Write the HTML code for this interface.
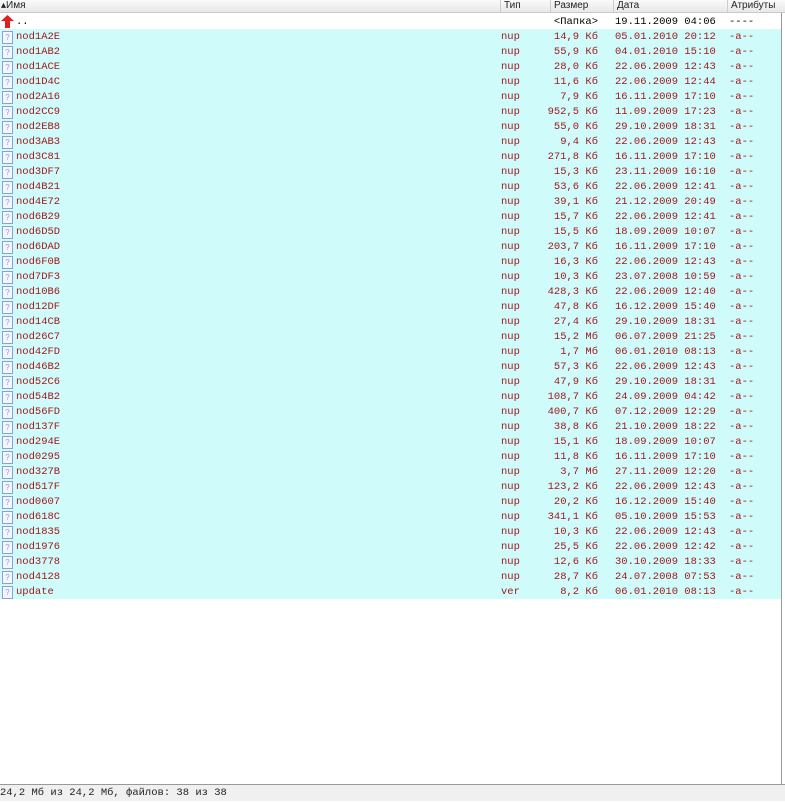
<!DOCTYPE html><html><head><meta charset="utf-8"><style>
body{margin:0;width:785px;height:800px;background:#fff;position:relative;overflow:hidden;font-family:"Liberation Mono",monospace;font-size:10.5px;}
#hdr{position:absolute;left:0;top:0;width:785px;height:12px;background:linear-gradient(#fafafa,#e8e8e8);border-bottom:1px solid #c8c8c8;font-family:"Liberation Sans","DejaVu Sans",sans-serif;font-size:10px;color:#222;}
#hdr span{position:absolute;top:0;line-height:12px}
#hdr i{position:absolute;top:0;width:1px;height:12px;background:#ccc}
.r{position:absolute;left:0;width:781px;height:15px;line-height:15px;color:#a11a1a;white-space:pre}
.c{background:#cffbfb}
.r span{position:absolute;top:1px}
.n{left:16px}.t{left:501px}.s{right:183px}.d{left:615px}.a{left:729px}
.ic{position:absolute;left:2px;top:2px;width:9px;height:11px;border:1px solid #8ea0d0;background:#f4f6ff;color:#8ea0d0;font-family:"Liberation Sans",sans-serif;font-size:8px;line-height:11px;text-align:center}
#vb{position:absolute;left:781px;top:13px;width:1px;height:771px;background:#999}
#st{position:absolute;left:0;top:784px;width:785px;height:16px;background:#f0f0f0;border-top:1px solid #999;line-height:17px;color:#222;font-size:10.5px}
</style></head><body>
<div id="hdr"><span style="left:1px">▴Имя</span><i style="left:500px"></i><span style="left:504px">Тип</span><i style="left:550px"></i><span style="left:554px">Размер</span><i style="left:613px"></i><span style="left:617px">Дата</span><i style="left:727px"></i><span style="left:731px">Атрибуты</span></div>
<div class="r" style="top:14px;color:#000"><svg style="position:absolute;left:1px;top:1px" width="13" height="13"><path d="M6.5 0L13 6H9V13H4V6H0Z" fill="#e02020"/></svg><span class="n">..</span><span class="s">&lt;Папка&gt;</span><span class="d">19.11.2009 04:06</span><span class="a">----</span></div>
<div id="rows"></div>
<div id="vb"></div>
<div id="st">24,2 Мб из 24,2 Мб, файлов: 38 из 38</div>
<script>
var d=[["nod1A2E","14,9 Кб","05.01.2010 20:12"],["nod1AB2","55,9 Кб","04.01.2010 15:10"],["nod1ACE","28,0 Кб","22.06.2009 12:43"],["nod1D4C","11,6 Кб","22.06.2009 12:44"],["nod2A16","7,9 Кб","16.11.2009 17:10"],["nod2CC9","952,5 Кб","11.09.2009 17:23"],["nod2EB8","55,0 Кб","29.10.2009 18:31"],["nod3AB3","9,4 Кб","22.06.2009 12:43"],["nod3C81","271,8 Кб","16.11.2009 17:10"],["nod3DF7","15,3 Кб","23.11.2009 16:10"],["nod4B21","53,6 Кб","22.06.2009 12:41"],["nod4E72","39,1 Кб","21.12.2009 20:49"],["nod6B29","15,7 Кб","22.06.2009 12:41"],["nod6D5D","15,5 Кб","18.09.2009 10:07"],["nod6DAD","203,7 Кб","16.11.2009 17:10"],["nod6F0B","16,3 Кб","22.06.2009 12:43"],["nod7DF3","10,3 Кб","23.07.2008 10:59"],["nod10B6","428,3 Кб","22.06.2009 12:40"],["nod12DF","47,8 Кб","16.12.2009 15:40"],["nod14CB","27,4 Кб","29.10.2009 18:31"],["nod26C7","15,2 Мб","06.07.2009 21:25"],["nod42FD","1,7 Мб","06.01.2010 08:13"],["nod46B2","57,3 Кб","22.06.2009 12:43"],["nod52C6","47,9 Кб","29.10.2009 18:31"],["nod54B2","108,7 Кб","24.09.2009 04:42"],["nod56FD","400,7 Кб","07.12.2009 12:29"],["nod137F","38,8 Кб","21.10.2009 18:22"],["nod294E","15,1 Кб","18.09.2009 10:07"],["nod0295","11,8 Кб","16.11.2009 17:10"],["nod327B","3,7 Мб","27.11.2009 12:20"],["nod517F","123,2 Кб","22.06.2009 12:43"],["nod0607","20,2 Кб","16.12.2009 15:40"],["nod618C","341,1 Кб","05.10.2009 15:53"],["nod1835","10,3 Кб","22.06.2009 12:43"],["nod1976","25,5 Кб","22.06.2009 12:42"],["nod3778","12,6 Кб","30.10.2009 18:33"],["nod4128","28,7 Кб","24.07.2008 07:53"],["update","8,2 Кб","06.01.2010 08:13","ver"]];
var h="";d.forEach(function(x,i){h+='<div class="r c" style="top:'+(29+i*15)+'px"><div class="ic">?</div><span class="n">'+x[0]+'</span><span class="t">'+(x[3]||"nup")+'</span><span class="s">'+x[1]+'</span><span class="d">'+x[2]+'</span><span class="a">-a--</span></div>';});
document.getElementById("rows").innerHTML=h;
</script>
</body></html>
